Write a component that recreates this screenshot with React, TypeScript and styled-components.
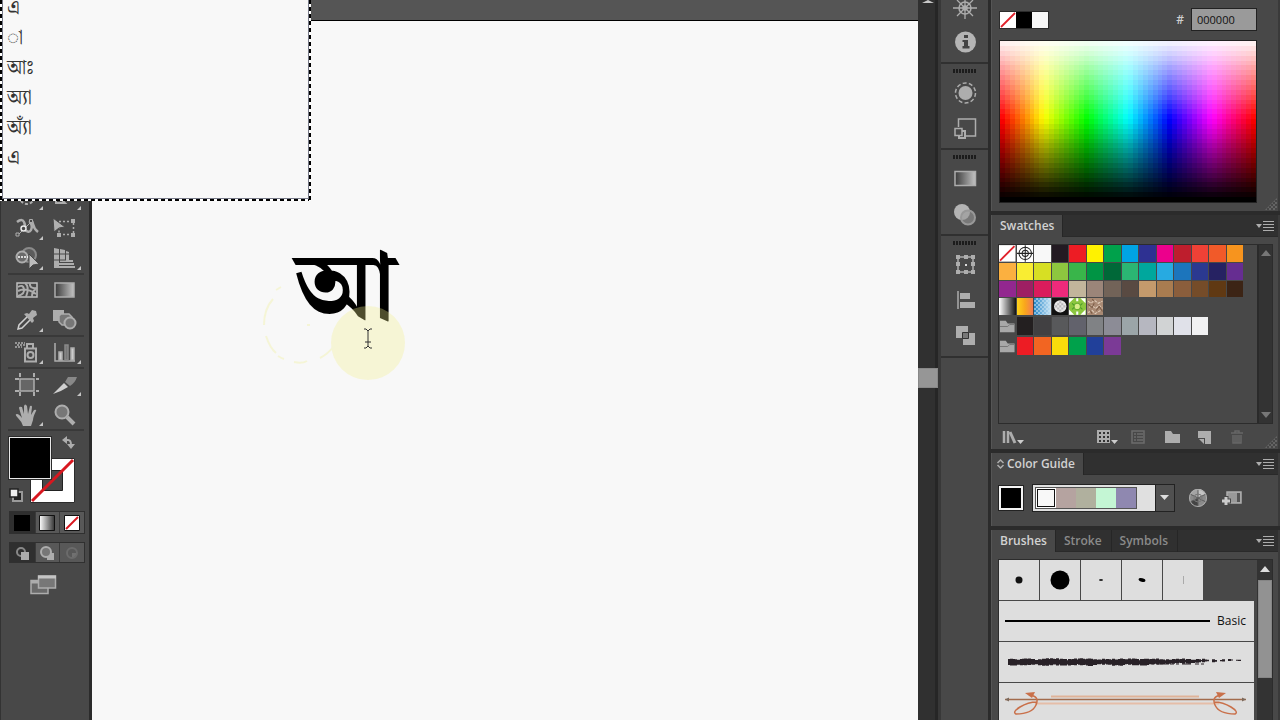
import React from "react";
import styled, { createGlobalStyle, css } from "styled-components";

const ui = '"Open Sans", "Noto Sans", sans-serif';
const bengali = '"Noto Serif Bengali", "Noto Sans Bengali", "Noto Sans", serif';
const c = {
  panel: "#484848",
  dark: "#2b2b2b",
  line: "#303030",
  icon: "#adadad",
  paper: "#f8f8f8",
};

const Global = createGlobalStyle`
  *, *::before, *::after { box-sizing: border-box; }
  body { margin: 0; background: ${c.dark}; font-family: ${ui}; overflow: hidden; }
  button { padding: 0; border: 0; background: none; color: inherit; font: inherit; }
  ul { list-style: none; margin: 0; padding: 0; }
  svg { display: block; }
`;

const Workspace = styled.div`
  display: flex;
  height: 100vh;
  overflow: hidden;
  position: relative;
`;

/* ---------- floating text window ---------- */

const ants = (dir: string) =>
  `repeating-linear-gradient(${dir}, #000 0 4px, #fff 4px 7px)`;

const TextWindow = styled.section`
  position: absolute;
  z-index: 2;
  left: 0;
  top: 0;
  width: 311px;
  height: 201px;
  padding: 0 2px 2px 2px;
  background:
    ${ants("180deg")} left / 2px 100% no-repeat,
    ${ants("180deg")} right / 2px 100% no-repeat,
    ${ants("90deg")} bottom / 100% 2px no-repeat;
`;

const TextBody = styled.ul`
  height: 100%;
  overflow: hidden;
  background: ${c.paper};
  border: 1px solid #777a88;
  border-top: 0;
  padding-left: 4px;
  display: flex;
  flex-direction: column;
  justify-content: flex-end;
  padding-bottom: 25px;
`;

const TextLine = styled.li`
  flex: none;
  height: 30px;
  font: 20px/30px ${bengali};
  color: #333;
`;

/* ---------- tool bar ---------- */

const ToolBar = styled.aside`
  flex: none;
  width: 92px;
  background: ${c.panel};
  border-left: 1px solid #333;
  border-right: 3px solid ${c.dark};
  padding: 183px 0 0 7px;
`;

const ToolGroup = styled.div`
  display: grid;
  grid-template-columns: 38px 38px;
  grid-auto-rows: 30px;
  width: 76px;
  border-bottom: 2px solid #393939;
`;

const ToolButton = styled.button<{ $more?: boolean }>`
  position: relative;
  display: grid;
  place-items: center;
  ${(p) =>
    p.$more &&
    css`
      &::after {
        content: "";
        position: absolute;
        right: 3px;
        bottom: 3px;
        border-left: 4px solid transparent;
        border-bottom: 4px solid #c4c4c4;
      }
    `}
`;

const FillStroke = styled.div`
  position: relative;
  width: 70px;
  height: 75px;
  margin-top: 5px;
`;

const FillButton = styled.button`
  position: absolute;
  left: 0;
  top: 0;
  width: 44px;
  height: 44px;
  background: #000;
  border: 2px solid #e8e8e8;
  outline: 1px solid #2c2c2c;
  outline-offset: -1px;
`;

const StrokeButton = styled.button`
  position: absolute;
  left: 22px;
  top: 22px;
`;

const SwapButton = styled.button`
  position: absolute;
  left: 54px;
  top: 0;
`;

const DefaultButton = styled.button`
  position: absolute;
  left: 0;
  top: 51px;
`;

const Segment = styled.div`
  display: grid;
  grid-template-columns: repeat(3, 1fr);
  width: 76px;
  margin: 0 0 8px 1px;
  border: 1px solid #303030;
`;

const SegmentButton = styled.button<{ $on?: boolean; $short?: boolean }>`
  height: ${(p) => (p.$short ? 19 : 21)}px;
  display: grid;
  place-items: center;
  background: ${(p) => (p.$on ? "#2f2f2f" : "#585858")};
  & + & {
    border-left: 1px solid #3a3a3a;
  }
`;

const ScreenMode = styled.button`
  display: block;
  margin: 12px 0 0 22px;
`;

/* ---------- document ---------- */

const Document = styled.main`
  flex: 1;
  min-width: 0;
  display: flex;
  flex-direction: column;
`;

const DocumentBar = styled.div`
  height: 21px;
  background: #555;
  border-bottom: 1px solid #000;
`;

const Artboard = styled.div`
  position: relative;
  flex: 1;
  background: ${c.paper};
  overflow: hidden;
`;

const BigLetter = styled.div`
  position: absolute;
  left: 203px;
  top: 204px;
  font: 700 96px/130px ${bengali};
  color: #000;
`;

const Pointer = styled.svg`
  position: absolute;
  left: 158px;
  top: 249px;
`;

const ScrollTrack = styled.div`
  flex: none;
  width: 23px;
  background: linear-gradient(90deg, #303030 0 17px, #262626 17px 20px, #383838 20px);
  display: flex;
  flex-direction: column;
  align-items: flex-start;
`;

const ScrollArrow = styled.div`
  margin-left: 4px;
  border: 6px solid transparent;
  border-top: 0;
  border-bottom: 3px solid #c8c8c8;
`;

const ScrollSpace = styled.div<{ $grow: number }>`
  flex: ${(p) => p.$grow} 0 0;
`;

const ScrollThumb = styled.div`
  width: 20px;
  height: 20px;
  background: #969696;
  border: 1px solid #888;
`;

/* ---------- icon dock ---------- */

const Dock = styled.nav`
  flex: none;
  width: 50px;
  background: ${c.panel};
  border-right: 3px solid ${c.dark};
`;

const DockGroup = styled.div<{ $clipped?: boolean }>`
  display: flex;
  flex-direction: column;
  align-items: center;
  padding: 5px 0 1px;
  border-bottom: 2px solid ${c.line};
  ${(p) =>
    p.$clipped &&
    css`
      height: 64px;
      overflow: hidden;
      justify-content: flex-end;
    `}
`;

const Grip = styled.div`
  width: 24px;
  height: 4px;
  margin-bottom: 2px;
  background: repeating-linear-gradient(90deg, #1c1c1c 0 2px, ${c.panel} 2px 3px);
`;

const DockButton = styled.button`
  flex: none;
  width: 36px;
  height: 36px;
  display: grid;
  place-items: center;
`;

/* ---------- panels ---------- */

const Panels = styled.aside`
  flex: none;
  width: 289px;
  display: flex;
  flex-direction: column;
  gap: 4px;
  background: ${c.dark};
`;

const Panel = styled.section<{ $fill?: boolean }>`
  position: relative;
  background: ${c.panel};
  border-left: 1px solid #555;
  border-right: 2px solid #3a3a3a;
  ${(p) =>
    p.$fill &&
    css`
      flex: 1;
      min-height: 0;
      display: flex;
      flex-direction: column;
    `}
`;

const TabBar = styled.div`
  flex: none;
  display: flex;
  height: 22px;
  background: #303030;
  border-bottom: 1px solid #2a2a2a;
`;

const Tab = styled.button<{ $on?: boolean }>`
  display: flex;
  align-items: center;
  gap: 2px;
  height: 22px;
  padding: 0 ${(p) => (p.$on ? 8 : 9)}px 0 8px;
  font: 600 12px/22px ${ui};
  color: ${(p) => (p.$on ? "#d2d2d2" : "#8a8a8a")};
  background: ${(p) => (p.$on ? c.panel : "transparent")};
  border-right: 1px solid #262626;
`;

const GuideTab = styled(Tab)`
  padding-left: 4px;
`;

const MenuButton = styled.button`
  margin: 0 4px 0 auto;
  display: grid;
  place-items: center;
`;

const ColorBody = styled.div`
  padding: 8px 21px 8px 7px;
`;

const ColorTop = styled.div`
  display: flex;
  align-items: center;
  margin-bottom: 9px;
`;

const MiniSwatches = styled.div`
  display: flex;
  border: 1px solid #2c2c2c;
`;

const MiniSwatch = styled.button<{ $color: string }>`
  width: 16px;
  height: 16px;
  background: ${(p) => p.$color};
`;

const HexLabel = styled.label`
  margin-left: auto;
  display: flex;
  align-items: center;
  gap: 7px;
  font: 600 12px/16px ${ui};
  color: #cfcfcf;
`;

const HexInput = styled.input`
  width: 66px;
  height: 23px;
  padding: 0 5px;
  border: 1px solid #222;
  border-radius: 0;
  outline: 0;
  background: #9a9a9a;
  font: 11px/20px ${ui};
  color: #111;
`;

const SpectrumFrame = styled.div`
  border: 1px solid #222;
  height: 163px;
  svg {
    width: 100%;
    height: 100%;
  }
`;

const ResizeGrip = styled.div`
  position: absolute;
  right: 1px;
  bottom: 1px;
  width: 12px;
  height: 12px;
  background: repeating-conic-gradient(#777 0 25%, #444 0 50%) 0 0 / 4px 4px;
  clip-path: polygon(100% 0, 100% 100%, 0 100%);
  opacity: 0.6;
`;

const SwatchArea = styled.div`
  display: flex;
  margin: 7px 5px 0 6px;
  height: 180px;
  border: 1px solid #2c2c2c;
`;

const SwatchList = styled.div`
  flex: 1;
`;

const SwatchGrid = styled.div<{ $rows: number }>`
  display: grid;
  width: 244px;
  height: ${(p) => (p.$rows === 4 ? 70 : 18)}px;
  grid-template-columns: repeat(14, 1fr);
  grid-template-rows: repeat(${(p) => p.$rows}, 1fr);
  gap: 1px;
  & + & {
    margin-top: 2px;
  }
`;

const SwatchCell = styled.button<{ $fill?: string }>`
  background: ${(p) => p.$fill || "none"};
  min-width: 0;
  min-height: 0;
  overflow: hidden;
  svg {
    width: 100%;
    height: 100%;
  }
`;

const SideScroll = styled.div`
  flex: none;
  width: 15px;
  display: flex;
  flex-direction: column;
  align-items: center;
  justify-content: space-between;
  padding: 5px 0;
  background: #333;
  border-left: 2px solid #2a2a2a;
`;

const Arrow = styled.div<{ $down?: boolean; $bright?: boolean }>`
  border: 5px solid transparent;
  ${(p) =>
    p.$down
      ? `border-bottom: 0; border-top: 6px solid #777;`
      : `border-top: 0; border-bottom: 6px solid ${p.$bright ? "#ddd" : "#777"};`}
`;

const SwatchFooter = styled.div`
  display: flex;
  align-items: center;
  justify-content: space-between;
  height: 25px;
  padding: 0 16px 0 8px;
`;

const FooterButtons = styled.div`
  display: grid;
  grid-template-columns: repeat(5, 33px);
  justify-items: start;
`;

const GuideBody = styled.div`
  display: flex;
  align-items: center;
  height: 51px;
  padding: 0 6px 6px;
`;

const BaseColor = styled.button`
  width: 26px;
  height: 26px;
  background: #000;
  border: 3px solid #f4f4f4;
  outline: 1px solid #222;
  outline-offset: -1px;
`;

const Harmony = styled.div`
  display: flex;
  align-items: center;
  width: 124px;
  height: 28px;
  margin-left: 8px;
  padding: 0 2px;
  background: #e0e0e0;
  border: 1px solid #222;
`;

const HarmonyStrip = styled.div`
  display: flex;
  height: 22px;
  border: 1px solid #555;
`;

const HarmonyColor = styled.div<{ $color: string; $on?: boolean }>`
  width: 20px;
  background: ${(p) => p.$color};
  border: ${(p) => (p.$on ? "1px solid #fff" : "0")};
  box-shadow: ${(p) => (p.$on ? "inset 0 0 0 1px #111" : "none")};
`;

const HarmonyMenu = styled.button`
  width: 19px;
  height: 28px;
  display: grid;
  place-items: center;
  background: #505050;
  border: 1px solid #222;
  border-left: 0;
`;

const GuideIcon = styled.button`
  margin-left: 13px;
`;

const BrushArea = styled.div`
  flex: 1;
  min-height: 0;
  display: flex;
  margin: 7px 5px 0 6px;
  border: 1px solid #2c2c2c;
  border-bottom: 0;
  overflow: hidden;
`;

const BrushList = styled.div`
  flex: 1;
  min-width: 0;
`;

const BrushTips = styled.div`
  display: flex;
  gap: 1px;
  height: 41px;
  padding-bottom: 1px;
`;

const BrushTip = styled.button`
  width: 40px;
  background: #dedede;
  display: grid;
  place-items: center;
`;

const BrushRow = styled.button`
  display: flex;
  align-items: center;
  width: 255px;
  height: 40px;
  margin-bottom: 1px;
  padding: 0 8px 0 6px;
  background: #dedede;
  font: 12px/16px ${ui};
  color: #111;
`;

const BasicLine = styled.span`
  flex: 1;
  height: 2px;
  margin-right: 7px;
  background: #000;
`;

const BrushScroll = styled.div`
  flex: none;
  width: 15px;
  background: #333;
  display: flex;
  flex-direction: column;
  align-items: center;
  padding-top: 6px;
`;

const BrushThumb = styled.div`
  width: 14px;
  height: 98px;
  margin-top: 8px;
  background: #929292;
  border: 1px solid #858585;
`;

/* ---------- icons ---------- */

const Icon = ({ w = 24, h = 24, children }: { w?: number; h?: number; children: React.ReactNode }) => (
  <svg width={w} height={h} viewBox={`0 0 ${w} ${h}`} fill="none" stroke={c.icon} strokeWidth="1.5" aria-hidden="true">
    {children}
  </svg>
);

const solid = { fill: c.icon, stroke: "none" };

const tools = {
  rotate: <Icon><circle cx="12" cy="11" r="7" strokeWidth="2" strokeDasharray="3 2" /></Icon>,
  scale: <Icon><path d="M3 17h9l-6-6H3zM11 14h10" strokeWidth="2" /></Icon>,
  warp: (
    <Icon>
      <path d="M2 6q5-4 7 0t0 7q5 5 7 1t-1-8q2-3 3 2t5 8" strokeWidth="2.500" />
      <path d="M3 19L18 4" strokeWidth="1" />
      <circle cx="8.500" cy="12.500" r="2.500" fill="#484848" stroke="#e8e8e8" />
      <path d="M1 17h3v3H1zM14.500 3.500h3v3h-3z" fill="#484848" strokeWidth="1" />
    </Icon>
  ),
  transform: (
    <Icon>
      <path d="M6 5.500h14.500v13H6z" strokeDasharray="2 2" />
      <path d="M18 3h4v4h-4zM18 17h4v4h-4zM4 17h4v4H4z" {...solid} />
      <path d="M0 2l12 9-6 1-5 4z" fill="#b0b0b0" stroke="#484848" strokeWidth="1" />
    </Icon>
  ),
  shape: (
    <Icon>
      <circle cx="14" cy="9" r="7" strokeWidth="2" stroke="#8a8a8a" fill="#5c5c5c" />
      <circle cx="7" cy="11" r="5.500" fill="#6a6a6a" strokeWidth="2" />
      <path d="M3 11h10" stroke="#fff" strokeDasharray="2 1" />
      <path d="M14 8l10 10-6 1-4 4z" fill="#bdbdbd" stroke="#484848" strokeWidth="1" />
    </Icon>
  ),
  perspective: (
    <Icon>
      <path d="M1 2l5 1v19H1zM7 3l5 1v12H7zM13 5l3 1v8h-3z" {...solid} />
      <path d="M6 18h15M12 15h8M2 21h20" strokeWidth="2" />
      <path d="M1 8h15M1 14h12" stroke="#484848" strokeWidth="1" />
    </Icon>
  ),
  mesh: (
    <Icon>
      <path d="M2 5h20v14H2z" stroke="#c0c0c0" />
      <path d="M3 9q5-3 6 2t-6 7M10 5q5 4 1 14M15 5q-1 6 7 5M3 13q8-4 18 3M17 19q0-6 4-8" strokeWidth="2" />
    </Icon>
  ),
  gradient: (
    <Icon>
      <defs>
        <linearGradient id="gray"><stop offset="0" stopColor="#3a3a3a" /><stop offset="1" stopColor="#c4c4c4" /></linearGradient>
      </defs>
      <path d="M2 5h19v14H2z" fill="url(#gray)" />
    </Icon>
  ),
  dropper: (
    <Icon>
      <path d="M13 8L4 17l-1 4 4-1 9-9" stroke="#d0d0d0" />
      <path d="M9 6l3-1 2 1 3-4 4 1 1 4-4 3 1 3-2 2z" {...solid} />
    </Icon>
  ),
  blend: (
    <Icon>
      <path d="M0 2h11v11H0z" {...solid} />
      <path d="M8 6h8l3 3v5l-3 3H9l-3-3V8z" fill="#777" />
      <circle cx="17" cy="15" r="5.500" fill="#777" strokeWidth="2" />
    </Icon>
  ),
  spray: (
    <Icon>
      <path d="M10 8.500h11v13H10zM12 8V4h6v4" strokeWidth="2" />
      <circle cx="15.500" cy="15" r="3" strokeWidth="2" />
      <path d="M0 3h10M2 5h8M0 7h7" strokeDasharray="2 1" strokeWidth="1.500" />
    </Icon>
  ),
  chart: (
    <Icon>
      <path d="M2 3v18h20" />
      <path d="M6 12h3v8H6zM18 8h3v12h-3z" fill="#ccc" />
      <path d="M12 5h3v15h-3z" fill="#777" stroke="#888" />
    </Icon>
  ),
  artboard: (
    <Icon>
      <path d="M5 7h14v12H5z" fill="#666" />
      <path d="M5 1v4M19 1v4M5 20v4M19 20v4M0 7h4M21 7h4M0 19h4M21 19h4" strokeWidth="2" />
    </Icon>
  ),
  slice: (
    <Icon>
      <path d="M12 10l3-5h9q-2 6-7 9z" fill="#888" stroke="none" />
      <path d="M0 22l11-11 4 4q-6 4-15 7z" fill="#d0d0d0" stroke="none" />
    </Icon>
  ),
  hand: (
    <Icon>
      <path d="M8 24q-1-4-5-8-4-4-1-4 2 0 5 4L4 6q0-2 3-1l2 7V4q1-3 3 0l1 8 2-8q2-1 2 1l-1 8 3-5q3-1 2 1-3 6-3 9l-2 6z" {...solid} />
    </Icon>
  ),
  zoom: (
    <Icon>
      <circle cx="9" cy="10" r="6.500" fill="#777" strokeWidth="2" />
      <path d="M14 15l7 7" strokeWidth="4" />
    </Icon>
  ),
};

const NoneIcon = () => (
  <svg width="16" height="16" viewBox="0 0 16 16" aria-hidden="true">
    <path d="M0 0h16v16H0z" fill="#fff" />
    <path d="M1 15L15 1" stroke="#e0202a" strokeWidth="1.800" />
  </svg>
);

const MenuIcon = () => (
  <Icon w={18} h={12}>
    <path d="M0 4h6l-3 4z" {...solid} />
    <path d="M7 1.500h11M7 4.500h11M7 7.500h11M7 10.500h11" strokeWidth="1" />
  </Icon>
);

const dock = {
  wheel: (
    <Icon>
      <circle cx="12" cy="13" r="6" />
      <circle cx="12" cy="13" r="2" fill={c.icon} />
      <path d="M12 1v24M0 13h24M4 5l16 16M20 5L4 21" strokeWidth="1.300" />
    </Icon>
  ),
  info: (
    <Icon>
      <circle cx="12.500" cy="11" r="10.500" fill="#b5b5b5" stroke="none" />
      <path d="M11 4h4v3h-4zM9.500 9h5.500v6h1.500v2.500h-7V15H11v-4H9.500z" fill="#444" stroke="none" />
    </Icon>
  ),
  appearance: (
    <Icon>
      <circle cx="12.500" cy="12" r="7" {...solid} />
      <circle cx="12.500" cy="12" r="10" strokeDasharray="4 2.280" />
    </Icon>
  ),
  styles: (
    <Icon>
      <path d="M5.500 10V2h17v17H12" />
      <path d="M2 11.500h7v7H2z" fill="#484848" />
      <path d="M9 14h3v7H6v-2" strokeWidth="2" />
    </Icon>
  ),
  gradient: (
    <Icon><path d="M2 4.500h20.500v14H2z" fill="url(#gray)" /></Icon>
  ),
  transparency: (
    <Icon>
      <circle cx="9" cy="9" r="8" fill="#b4b4b4" stroke="none" />
      <circle cx="15" cy="14.500" r="7" fill="#9a9a9a" fillOpacity=".6" stroke="#989898" strokeWidth="2" />
    </Icon>
  ),
  transform: (
    <Icon>
      <path d="M5 4h15v15H5z" />
      <path d="M3 2h4v4H3zM11 2h4v4h-4zM18 2h4v4h-4zM3 9h4v4H3zM18 9h4v4h-4zM3 17h4v4H3zM11 17h4v4h-4zM18 17h4v4h-4z" {...solid} />
      <path d="M12 11h2v2h-2z" fill="#ddd" stroke="none" />
    </Icon>
  ),
  align: (
    <Icon>
      <path d="M5 2v18" />
      <path d="M7 4h10v6H7zM7 13h15v6H7z" {...solid} />
    </Icon>
  ),
  pathfinder: (
    <Icon>
      <path d="M3 1h12v12H3z" {...solid} />
      <path d="M10 8h12v12H10z" {...solid} />
      <path d="M9.500 7.500h6v6h-6z" fill="#777" stroke="#333" strokeWidth="1" />
    </Icon>
  ),
};

/* ---------- data ---------- */

const lines = ["এ", "া", "আঃ", "অ্যা", "অ্যাঁ", "এ"];

const swatchColors = [
  "#f8f8f8", "#231a22", "#ed1c24", "#fff200", "#00a14b", "#00a4e4", "#2e3192", "#ec008c", "#be1e2d", "#ef4136", "#f15a29", "#f7941e",
  "#fbb040", "#f9ed32", "#d7df23", "#8dc63f", "#39b54a", "#009444", "#006838", "#2bb673", "#00a79d", "#27aae1", "#1c75bc", "#2b3990", "#262262", "#662d91",
  "#92278f", "#9e1f63", "#da1c5c", "#ee2a7b", "#c2b59b", "#9b8579", "#726358", "#594a42", "#c49a6c", "#a97c50", "#8b5e3c", "#754c29", "#603913", "#3c2415",
];

const checker = "repeating-conic-gradient(#cfe6f488 0 25%, #fff0 0 50%) 0 0 / 4px 4px";
const patterns = [
  "linear-gradient(90deg, #fff, #111)",
  "linear-gradient(90deg, #fdd31a, #f9a61c 50%, #f37b55)",
  `${checker}, linear-gradient(90deg, #2384c6, #c5e3f5)`,
];
const grays = ["#231f20", "#414042", "#58595b", "#62626c", "#808285", "#8c8c96", "#9ba5a8", "#b6b7c0", "#d1d3d4", "#e0e1e9", "#f1f1f2"];
const brights = ["#ed1c24", "#f26522", "#f9dc0b", "#00a14b", "#21409a", "#7b3a96"];

const cols = 52;
const rows = 33;
const spectrum = Array.from({ length: cols * rows }, (_, i) => {
  const x = i % cols;
  const y = Math.floor(i / cols);
  const l = 97 - (y / (rows - 1)) * 97;
  return { x, y, fill: `hsl(${(x / (cols - 1)) * 360} 100% ${l}%)` };
});

/* Ragged strokes of the charcoal brush: thick at the left, breaking up at the right. */
const charcoal = Array.from({ length: 118 }, (_, i) => {
  const x = 3 + i * 2;
  const wobble = Math.sin(i * i * 0.7) + Math.sin(i * 0.37) * 0.4;
  const fade = Math.max(0, (i - 66) / 52);
  const half = Math.max(0.5, 2.9 - fade * 2.5 + wobble * 0.6);
  const mid = 6 - fade * 2 + Math.sin(i * 0.5) * 0.3;
  if (i > 98 && i % 4 < 2) return "";
  return `M${x} ${mid - half}h3v${half * 2}h-3z`;
}).join("");

const Folder = () => (
  <svg viewBox="0 0 17 17" aria-hidden="true">
    <path d="M1 3h6l2 3h7v9H1z" fill="#a8a8a8" />
    <path d="M1 9h8l2-2h5" stroke="#777" fill="none" />
  </svg>
);

export default function App() {
  return (
    <Workspace>
      <Global />
      <TextWindow>
        <TextBody>
          {lines.map((t, i) => (
            <TextLine key={i}>{t}</TextLine>
          ))}
        </TextBody>
      </TextWindow>

      <ToolBar>
        <ToolGroup>
          <ToolButton $more aria-label="Rotate">{tools.rotate}</ToolButton>
          <ToolButton $more aria-label="Scale">{tools.scale}</ToolButton>
          <ToolButton $more aria-label="Warp">{tools.warp}</ToolButton>
          <ToolButton aria-label="Free transform">{tools.transform}</ToolButton>
          <ToolButton $more aria-label="Shape builder">{tools.shape}</ToolButton>
          <ToolButton $more aria-label="Perspective grid">{tools.perspective}</ToolButton>
        </ToolGroup>
        <ToolGroup>
          <ToolButton aria-label="Mesh">{tools.mesh}</ToolButton>
          <ToolButton aria-label="Gradient">{tools.gradient}</ToolButton>
          <ToolButton $more aria-label="Eyedropper">{tools.dropper}</ToolButton>
          <ToolButton aria-label="Blend">{tools.blend}</ToolButton>
        </ToolGroup>
        <ToolGroup>
          <ToolButton $more aria-label="Symbol sprayer">{tools.spray}</ToolButton>
          <ToolButton $more aria-label="Column graph">{tools.chart}</ToolButton>
        </ToolGroup>
        <ToolGroup>
          <ToolButton aria-label="Artboard">{tools.artboard}</ToolButton>
          <ToolButton $more aria-label="Slice">{tools.slice}</ToolButton>
          <ToolButton $more aria-label="Hand">{tools.hand}</ToolButton>
          <ToolButton aria-label="Zoom">{tools.zoom}</ToolButton>
        </ToolGroup>

        <FillStroke>
          <StrokeButton aria-label="Stroke">
            <svg width="45" height="45" viewBox="0 0 45 45">
              <path d="M.5.5h44v44H.5z" fill="#fff" stroke="#2c2c2c" />
              <path d="M12.500 12.500h20v20h-20z" fill="#484848" stroke="#222" />
              <path d="M2 43L43 2" stroke="#d8171f" strokeWidth="3" />
            </svg>
          </StrokeButton>
          <FillButton aria-label="Fill" />
          <SwapButton aria-label="Swap fill and stroke">
            <Icon w={14} h={14}>
              <path d="M4 4h2q3 0 3 5" strokeWidth="2" />
              <path d="M0 4l5-4v8zM5 8h8l-4 5z" {...solid} />
            </Icon>
          </SwapButton>
          <DefaultButton aria-label="Default fill and stroke">
            <Icon w={16} h={16}>
              <path d="M5 5h9v9H5z" stroke="#999" strokeWidth="2" fill="#222" />
              <path d="M2 2h8v8H2z" fill="#eee" stroke="#222" />
            </Icon>
          </DefaultButton>
        </FillStroke>

        <Segment>
          <SegmentButton $on aria-label="Color">
            <svg width="16" height="16"><path d="M0 0h16v16H0z" fill="#000" /></svg>
          </SegmentButton>
          <SegmentButton aria-label="Gradient fill">
            <svg width="16" height="16">
              <defs><linearGradient id="bw"><stop stopColor="#fff" /><stop offset="1" stopColor="#333" /></linearGradient></defs>
              <path d="M.5.5h15v15H.5z" fill="url(#bw)" stroke="#111" />
            </svg>
          </SegmentButton>
          <SegmentButton aria-label="No fill">
            <svg width="16" height="16">
              <path d="M.5.5h15v15H.5z" fill="#fff" stroke="#111" />
              <path d="M2 14L14 2" stroke="#d8171f" strokeWidth="2" />
            </svg>
          </SegmentButton>
        </Segment>
        <Segment>
          <SegmentButton $on $short aria-label="Draw normal">
            <Icon w={14} h={14}><circle cx="6" cy="6" r="4" strokeWidth="2" stroke="#888" /><path d="M6 6h8v8H6z" {...solid} /></Icon>
          </SegmentButton>
          <SegmentButton $short aria-label="Draw behind">
            <Icon w={14} h={14}><path d="M7 7h7v7H7z" {...solid} /><circle cx="6" cy="6" r="5" fill="#777" strokeWidth="2" /></Icon>
          </SegmentButton>
          <SegmentButton $short aria-label="Draw inside">
            <Icon w={14} h={14}><circle cx="7" cy="7" r="5" stroke="#6b6b6b" strokeWidth="2" /><path d="M7 7h4v2l-2 2H7z" fill="#707070" stroke="none" /></Icon>
          </SegmentButton>
        </Segment>
        <ScreenMode aria-label="Screen mode">
          <Icon w={27} h={20}>
            <path d="M1 5.500h17v13H1z" fill="#6a6a6a" />
            <path d="M1 7h17" strokeWidth="3" />
            <path d="M8.500 1h17v12h-17z" fill="#777" />
            <path d="M8 2h18" strokeWidth="3" stroke="#c4c4c4" />
          </Icon>
        </ScreenMode>
      </ToolBar>

      <Document>
        <DocumentBar />
        <Artboard>
          <BigLetter>আ</BigLetter>
          <Pointer width="170" height="120" viewBox="0 0 170 120" aria-hidden="true">
            <circle cx="118" cy="73" r="37" fill="#f3f08c" fillOpacity=".32" />
            <path d="M14 55q0-16 9-26M16 66q4 12 10 17M28 86q3 2 6 3M44 92q8 2 13-1M70 88q8-4 14-12M26 20l5-3M57 55h3" fill="none" stroke="#f5f5d6" strokeWidth="2" />
            <path d="M114 59h2l2 2 2-2h2M118 61v15M114 78h2l2-2 2 2h2M115 72h6" fill="none" stroke="#333" />
          </Pointer>
        </Artboard>
      </Document>

      <ScrollTrack>
        <ScrollArrow />
        <ScrollSpace $grow={365} />
        <ScrollThumb />
        <ScrollSpace $grow={332} />
      </ScrollTrack>

      <Dock>
        <DockGroup $clipped>
          <DockButton aria-label="Navigator">{dock.wheel}</DockButton>
          <DockButton aria-label="Info">{dock.info}</DockButton>
        </DockGroup>
        <DockGroup>
          <Grip />
          <DockButton aria-label="Appearance">{dock.appearance}</DockButton>
          <DockButton aria-label="Graphic styles">{dock.styles}</DockButton>
        </DockGroup>
        <DockGroup>
          <Grip />
          <DockButton aria-label="Gradient">{dock.gradient}</DockButton>
          <DockButton aria-label="Transparency">{dock.transparency}</DockButton>
        </DockGroup>
        <DockGroup>
          <Grip />
          <DockButton aria-label="Transform">{dock.transform}</DockButton>
          <DockButton aria-label="Align">{dock.align}</DockButton>
          <DockButton aria-label="Pathfinder">{dock.pathfinder}</DockButton>
        </DockGroup>
      </Dock>

      <Panels>
        <Panel>
          <ColorBody>
            <ColorTop>
              <MiniSwatches>
                <MiniSwatch $color="#fff" aria-label="None"><NoneIcon /></MiniSwatch>
                <MiniSwatch $color="#000" aria-label="Black" />
                <MiniSwatch $color="#f8f8f8" aria-label="White" />
              </MiniSwatches>
              <HexLabel>
                #
                <HexInput defaultValue="000000" />
              </HexLabel>
            </ColorTop>
            <SpectrumFrame>
              <svg viewBox={`0 0 ${cols} ${rows}`} preserveAspectRatio="none" shapeRendering="crispEdges" aria-hidden="true">
                {spectrum.map((s) => (
                  <rect key={`${s.x}-${s.y}`} x={s.x} y={s.y} width="1" height="1" fill={s.fill} />
                ))}
              </svg>
            </SpectrumFrame>
          </ColorBody>
          <ResizeGrip />
        </Panel>

        <Panel>
          <TabBar>
            <Tab $on>Swatches</Tab>
            <MenuButton aria-label="Swatches menu"><MenuIcon /></MenuButton>
          </TabBar>
          <SwatchArea>
            <SwatchList>
              <SwatchGrid $rows={4}>
                <SwatchCell aria-label="None"><NoneIcon /></SwatchCell>
                <SwatchCell $fill="#fff" aria-label="Registration">
                  <svg viewBox="0 0 16 16" fill="none" stroke="#222">
                    <circle cx="8" cy="8" r="6" /><circle cx="8" cy="8" r="3" /><path d="M8 0v16M0 8h16" />
                  </svg>
                </SwatchCell>
                {swatchColors.map((s) => <SwatchCell key={s} $fill={s} aria-label={s} />)}
                {patterns.map((s, i) => <SwatchCell key={s} $fill={s} aria-label={`Gradient ${i + 1}`} />)}
                <SwatchCell $fill="#111" aria-label="Radial fade">
                  <svg viewBox="0 0 16 16">
                    <circle cx="8" cy="8" r="6" fill="#e8e8e8" />
                    <path d="M5 5h2v2H5zM9 5h2v2H9zM7 7h2v2H7zM5 9h2v2H5zM9 9h2v2H9zM7 3h2v2H7zM7 11h2v2H7zM3 7h2v2H3zM11 7h2v2h-2z" fill="#bbb" />
                  </svg>
                </SwatchCell>
                <SwatchCell $fill="#8cc63f" aria-label="Foliage pattern">
                  <svg viewBox="0 0 16 16">
                    <path d="M0 0h5L0 5zM16 0v5l-5-5zM0 16v-5l5 5zM16 16h-5l5-5zM7 0h2v3H7zM7 13h2v3H7z" fill="#fff" />
                    <circle cx="8" cy="8" r="3" fill="#d9ec8a" stroke="#6bb02f" />
                    <path d="M3 5l2 2M13 5l-2 2M3 11l2-2M13 11l-2-2" stroke="#4c9b2a" />
                  </svg>
                </SwatchCell>
                <SwatchCell $fill="#a98a74" aria-label="Stone pattern">
                  <svg viewBox="0 0 16 16" fill="none">
                    <path d="M1 3l3 2 3-3 4 3 4-2M2 9l3-2 3 3 4-3 3 3M1 14l4-2 3 3 5-3" stroke="#e0cdbb" strokeDasharray="3 1" />
                    <path d="M1 6l4 3 2-4M9 12l3-4 3 5M5 1l2 2M3 12l2 3" stroke="#7c5c46" />
                  </svg>
                </SwatchCell>
              </SwatchGrid>
              <SwatchGrid $rows={1}>
                <SwatchCell aria-label="Grays"><Folder /></SwatchCell>
                {grays.map((s) => <SwatchCell key={s} $fill={s} aria-label={s} />)}
              </SwatchGrid>
              <SwatchGrid $rows={1}>
                <SwatchCell aria-label="Brights"><Folder /></SwatchCell>
                {brights.map((s) => <SwatchCell key={s} $fill={s} aria-label={s} />)}
              </SwatchGrid>
            </SwatchList>
            <SideScroll>
              <Arrow />
              <Arrow $down />
            </SideScroll>
          </SwatchArea>
          <SwatchFooter>
            <button aria-label="Swatch libraries">
              <Icon w={26} h={16}>
                <path d="M4 2v12M8 2v12" strokeWidth="2.500" />
                <path d="M10 3l5 11" strokeWidth="3" />
                <path d="M17 11h7l-3.500 4z" fill="#ccc" stroke="none" />
              </Icon>
            </button>
            <FooterButtons>
              <button aria-label="Show swatch kinds">
                <Icon w={24} h={16}>
                  <path d="M0 1h13v13H0z" {...solid} />
                  <path d="M2 3h2v2H2zM6 3h2v2H6zM10 3h2v2h-2zM2 7h2v2H2zM6 7h2v2H6zM10 7h2v2h-2zM2 11h2v2H2zM6 11h2v2H6zM10 11h2v2h-2z" fill="#333" stroke="none" />
                  <path d="M14 11h7l-3.500 4z" fill="#ccc" stroke="none" />
                </Icon>
              </button>
              <button aria-label="Swatch options">
                <Icon w={16} h={16}><path d="M2 2h12v12H2zM4 5h2M7 5h6M4 8h2M7 8h6M4 11h2M7 11h6" stroke="#6c6c6c" /></Icon>
              </button>
              <button aria-label="New color group">
                <Icon w={18} h={16}><path d="M2 2h6l2 3h7v9H2z" {...solid} /></Icon>
              </button>
              <button aria-label="New swatch">
                <Icon w={16} h={16}><path d="M2 2h13v13H9V9H2z" {...solid} /><path d="M3 10h5v5z" {...solid} /></Icon>
              </button>
              <button aria-label="Delete swatch">
                <Icon w={16} h={16}><path d="M2 4h12M6 4V2h4v2M4 6v8h8V6M6 6v8M8 6v8M10 6v8" stroke="#666" /></Icon>
              </button>
            </FooterButtons>
          </SwatchFooter>
          <ResizeGrip />
        </Panel>

        <Panel>
          <TabBar>
            <GuideTab $on>
              <Icon w={9} h={12}><path d="M1.500 5l3-3 3 3M1.500 7l3 3 3-3" /></Icon>
              Color Guide
            </GuideTab>
            <MenuButton aria-label="Color guide menu"><MenuIcon /></MenuButton>
          </TabBar>
          <GuideBody>
            <BaseColor aria-label="Base color" />
            <Harmony>
              <HarmonyStrip>
                <HarmonyColor $color="#f8f8f8" $on />
                <HarmonyColor $color="#b5a3a0" />
                <HarmonyColor $color="#b0b09e" />
                <HarmonyColor $color="#c4f6d4" />
                <HarmonyColor $color="#8f88b0" />
              </HarmonyStrip>
            </Harmony>
            <HarmonyMenu aria-label="Harmony rules">
              <Icon w={10} h={6}><path d="M0 0h9L4.500 5z" fill="#ddd" stroke="none" /></Icon>
            </HarmonyMenu>
            <GuideIcon aria-label="Edit colors">
              <Icon w={20} h={20}>
                <circle cx="10" cy="10" r="9" fill="#8a8a8a" stroke="none" />
                <path d="M10 10V1a9 9 0 0 1 8 5z" fill="#c4c4c4" stroke="none" />
                <path d="M10 10l-8 4a9 9 0 0 0 8 5z" fill="#444" stroke="none" />
                <path d="M10 10L2 6a9 9 0 0 1 8-5z" fill="#a4a4a4" stroke="none" />
                <path d="M10 1v18M2 6l16 8M2 14l16-8" stroke="#5c5c5c" strokeWidth="1" />
                <circle cx="10" cy="10" r="8.500" strokeWidth="1" />
                <circle cx="10" cy="10" r="4" stroke="#777" strokeWidth="1" />
              </Icon>
            </GuideIcon>
            <GuideIcon aria-label="Save color group">
              <Icon w={22} h={20}>
                <path d="M6 4h14v11H6z" fill="#999" />
                <path d="M16 5h3v9h-3z" fill="#555" stroke="none" />
                <path d="M5 8v10M0 13h10" strokeWidth="5" stroke="#484848" />
                <path d="M5 9v8M1 13h8" strokeWidth="3" stroke="#ccc" />
              </Icon>
            </GuideIcon>
          </GuideBody>
        </Panel>

        <Panel $fill>
          <TabBar>
            <Tab $on>Brushes</Tab>
            <Tab>Stroke</Tab>
            <Tab>Symbols</Tab>
            <MenuButton aria-label="Brushes menu"><MenuIcon /></MenuButton>
          </TabBar>
          <BrushArea>
            <BrushList>
              <BrushTips>
                <BrushTip aria-label="5 pt round"><svg width="8" height="8"><circle cx="4" cy="4" r="3.500" fill="#111" /></svg></BrushTip>
                <BrushTip aria-label="15 pt round"><svg width="20" height="20"><circle cx="10" cy="10" r="9.500" /></svg></BrushTip>
                <BrushTip aria-label="1 pt oval"><svg width="6" height="4"><ellipse cx="3" cy="2" rx="2" ry="1" fill="#222" /></svg></BrushTip>
                <BrushTip aria-label="3 pt oval"><svg width="8" height="6"><ellipse cx="4" cy="3" rx="3.500" ry="1.800" transform="rotate(15 4 3)" /></svg></BrushTip>
                <BrushTip aria-label="1 pt flat"><svg width="1" height="8"><path d="M0 0h1v8H0z" fill="#aaa" /></svg></BrushTip>
              </BrushTips>
              <BrushRow><BasicLine />Basic</BrushRow>
              <BrushRow aria-label="Charcoal">
                <svg width="241" height="12" viewBox="0 0 241 12">
                  <path d={charcoal} fill="#282127" />
                  <path d="M140 8h60" stroke="#282127" strokeDasharray="4 2 3 3 9 4" />
                </svg>
              </BrushRow>
              <BrushRow aria-label="Ornament">
                <svg width="241" height="32" viewBox="0 0 241 32" fill="none" stroke="#c9704a">
                  <path d="M46 9.500h148" stroke="#dfb399" strokeWidth="2" />
                  <path d="M30 16.500h184" stroke="#e5bda8" strokeWidth="2" />
                  <path d="M0 12.500h241" stroke="#a26b4c" strokeWidth="1.500" />
                  <path d="M0 12.500l4-2v4zM241 12.500l-4-2v4z" fill="#7b6a5d" stroke="none" />
                  {[0, 1].map((k) => (
                    <g key={k} transform={k ? "translate(241 0) scale(-1 1)" : undefined} strokeWidth="1.500">
                      <path d="M24 8q11 1 7 10t-20 9q-4-2 4-7t17-5" />
                      <path d="M20 6l10-1-3 6z" fill="#c9704a" stroke="none" />
                    </g>
                  ))}
                </svg>
              </BrushRow>
            </BrushList>
            <BrushScroll>
              <Arrow $bright />
              <BrushThumb />
            </BrushScroll>
          </BrushArea>
        </Panel>
      </Panels>
    </Workspace>
  );
}
